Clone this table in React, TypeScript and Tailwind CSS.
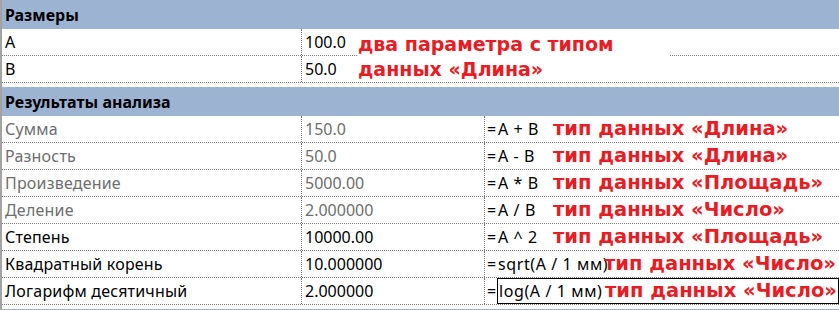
import React from 'react';

type Row = {
  name: string;
  value: string;
  formula: string;
  note: string;
  muted: boolean;
  formulaWidth: string;
  editing?: boolean;
};

const rows: Row[] = [
  { name: 'Сумма', value: '150.0', formula: 'A + B', note: 'тип данных «Длина»', muted: true, formulaWidth: 'w-[55px]' },
  { name: 'Разность', value: '50.0', formula: 'A - B', note: 'тип данных «Длина»', muted: true, formulaWidth: 'w-[55px]' },
  { name: 'Произведение', value: '5000.00', formula: 'A * B', note: 'тип данных «Площадь»', muted: true, formulaWidth: 'w-[55px]' },
  { name: 'Деление', value: '2.000000', formula: 'A / B', note: 'тип данных «Число»', muted: true, formulaWidth: 'w-[55px]' },
  { name: 'Степень', value: '10000.00', formula: 'A ^ 2', note: 'тип данных «Площадь»', muted: false, formulaWidth: 'w-[55px]' },
  { name: 'Квадратный корень', value: '10.000000', formula: 'sqrt(A / 1 мм)', note: 'тип данных «Число»', muted: false, formulaWidth: 'w-[106px]' },
  { name: 'Логарифм десятичный', value: '2.000000', formula: 'log(A / 1 мм)', note: 'тип данных «Число»', muted: false, formulaWidth: 'w-[106px]', editing: true },
];

const uiFont = "font-['Noto_Sans','Liberation_Sans',sans-serif]";
const noteFont = "font-['DejaVu_Sans','Liberation_Sans',sans-serif] font-bold text-[#e81c24]";

const GroupHeader: React.FC<{ title: string }> = ({ title }) => (
  <div className="h-[29px] bg-[#9cb4d2] flex items-center pl-[3px] font-bold text-[16px] text-black">
    {title}
  </div>
);

export default function App() {
  return (
    <div className={`w-[839px] h-[310px] bg-white overflow-hidden border-l-2 border-[#a3a3a3] text-[16px] leading-none ${uiFont}`}>
      <GroupHeader title="Размеры" />

      {/* Dimensions */}
      <div className="relative">
        <div className="h-[27px] flex border-b border-dotted border-[#7a7a7a]">
          <div className="w-[300px] pl-[3px] flex items-center border-r border-dotted border-[#7a7a7a]">A</div>
          <div className="flex-1 pl-[3px] flex items-center">100.0</div>
        </div>
        <div className="h-[27px] flex border-b border-dotted border-[#7a7a7a]">
          <div className="w-[300px] pl-[3px] flex items-center border-r border-dotted border-[#7a7a7a]">B</div>
          <div className="flex-1 pl-[3px] flex items-center">50.0</div>
        </div>
        {/* annotation pasted over the grid */}
        <div className={`absolute left-[356px] top-[3px] w-[311px] h-[48px] bg-white leading-[25px] text-[19px] ${noteFont}`}>
          <div>два параметра с типом</div>
          <div>данных «Длина»</div>
        </div>
      </div>

      <div className="h-[4px]" />
      <GroupHeader title="Результаты анализа" />

      {/* Analysis results */}
      {rows.map((r) => (
        <div key={r.name} className="h-[27px] flex border-b border-dotted border-[#7a7a7a]">
          <div
            className={`w-[300px] pl-[3px] flex items-center border-r border-dotted border-[#7a7a7a] tracking-[0.2px] ${r.muted ? 'text-[#6e6e6e]' : 'text-black'}`}
          >
            {r.name}
          </div>
          <div
            className={`w-[183px] pl-[3px] flex items-center border-r border-dotted border-[#7a7a7a] ${r.muted ? 'text-[#6e6e6e]' : 'text-black'}`}
          >
            {r.value}
          </div>
          <div className="flex-1 flex items-center pl-[2px]">
            <span className="w-[10px]">=</span>
            <div
              className={`flex-1 h-full flex items-center ${r.editing ? 'border border-black -mt-[1px] h-[27px] pl-[1px]' : 'pl-[1px]'}`}
            >
              <span className={`${r.formulaWidth} whitespace-nowrap tracking-[0.6px]`}>{r.formula}</span>
              <span className={`whitespace-nowrap text-[19.5px] ${noteFont}`}>{r.note}</span>
            </div>
          </div>
        </div>
      ))}
      <div className="h-[4px]" />
      <div className="h-[2px] bg-[#9cb4d2]" />
    </div>
  );
}
